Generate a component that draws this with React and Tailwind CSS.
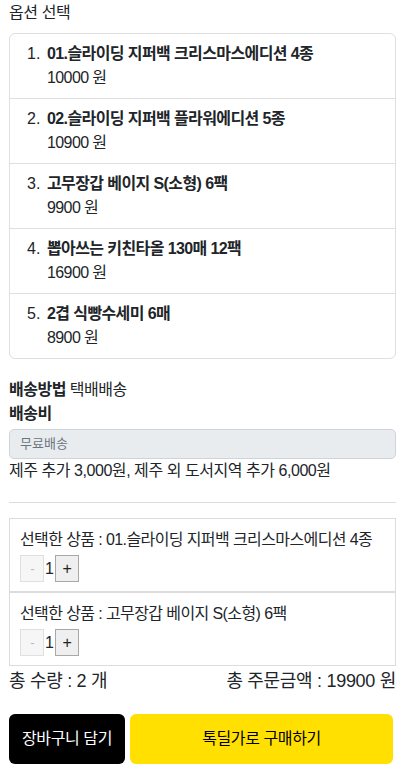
import React from 'react';

const options = [
  { name: '01.슬라이딩 지퍼백 크리스마스에디션 4종', price: 10000 },
  { name: '02.슬라이딩 지퍼백 플라워에디션 5종', price: 10900 },
  { name: '고무장갑 베이지 S(소형) 6팩', price: 9900 },
  { name: '뽑아쓰는 키친타올 130매 12팩', price: 16900 },
  { name: '2겹 식빵수세미 6매', price: 8900 },
];

const selected = [
  { name: '01.슬라이딩 지퍼백 크리스마스에디션 4종', qty: 1 },
  { name: '고무장갑 베이지 S(소형) 6팩', qty: 1 },
];

const font = { fontFamily: '"Liberation Sans", "Noto Sans CJK KR", sans-serif' };

const Stepper = ({ qty }) => (
  <div className="flex items-center h-[27px] mt-[3px]">
    <button
      type="button"
      disabled
      className="w-[24px] h-[27px] flex items-center justify-center bg-[#f6f6f6] border border-[#e0e0e0] text-[#bbb] text-[13px]"
    >
      -
    </button>
    <span className="px-[1px] text-[16px] leading-none tracking-normal">{qty}</span>
    <button
      type="button"
      className="w-[24px] h-[27px] flex items-center justify-center bg-[#efefef] border border-[#a8a8a8] text-[#222] text-[16px]"
    >
      +
    </button>
  </div>
);

export default function App() {
  return (
    <div className="w-[406px] min-h-[774px] bg-white text-[#212529] pl-[9px] pr-[10px] pt-[1px]" style={font}>
      <div className="text-[16px] leading-[24px] tracking-[-0.4px] mb-[8px]">옵션 선택</div>

      {/* 옵션 목록 */}
      <ol className="border border-[#dfdfdf] rounded-[6px]">
        {options.map((o, i) => (
          <li
            key={o.name}
            className={`flex px-[17px] py-[8px] ${i > 0 ? 'border-t border-[#dfdfdf]' : ''}`}
          >
            <span className="text-[16px] leading-[24px] w-[19px] shrink-0">{i + 1}.</span>
            <div className="ml-[1px] text-[16px] leading-[24px] tracking-[-0.6px]">
              <div className="font-bold">{o.name}</div>
              <div>{o.price} 원</div>
            </div>
          </li>
        ))}
      </ol>

      {/* 배송 */}
      <div className="mt-[19px] text-[16px] leading-[24px] tracking-[-0.5px]">
        <span className="font-bold">배송방법</span> 택배배송
      </div>
      <div className="text-[16px] leading-[24px] font-bold tracking-[-0.5px]">배송비</div>
      <div className="mt-[3px] h-[30px] rounded-[5px] bg-[#e9ecef] border border-[#ced4da] flex items-center px-[10px] text-[13px] text-[#6c757d]">
        무료배송
      </div>
      <div className="text-[16px] leading-[24px] tracking-[-0.45px]">제주 추가 3,000원, 제주 외 도서지역 추가 6,000원</div>

      <hr className="mt-[19px] mb-[15px] border-0 border-t border-[#dcdcdc]" />

      {/* 선택한 상품 */}
      <div>
        {selected.map((s) => (
          <div key={s.name} className="border border-[#dcdcdc] px-[10px] pt-[9px] pb-[9px] text-[16px] leading-[24px] tracking-[-0.6px]">
            <div>선택한 상품 : {s.name}</div>
            <Stepper qty={s.qty} />
          </div>
        ))}
      </div>

      <div className="flex justify-between items-center text-[18px] leading-[26px] tracking-[-0.3px] mt-[2px]">
        <span>총 수량 : 2 개</span>
        <span>총 주문금액 : 19900 원</span>
      </div>

      <div className="flex gap-[5px] mt-[20px] pr-[3px]">
        <button type="button" className="w-[116px] h-[50px] rounded-[6px] bg-black text-white text-[16px] tracking-[-0.4px]">
          장바구니 담기
        </button>
        <button type="button" className="flex-1 h-[50px] rounded-[6px] bg-[#ffe000] text-black text-[16px] tracking-[-0.4px]">
          톡딜가로 구매하기
        </button>
      </div>
    </div>
  );
}
